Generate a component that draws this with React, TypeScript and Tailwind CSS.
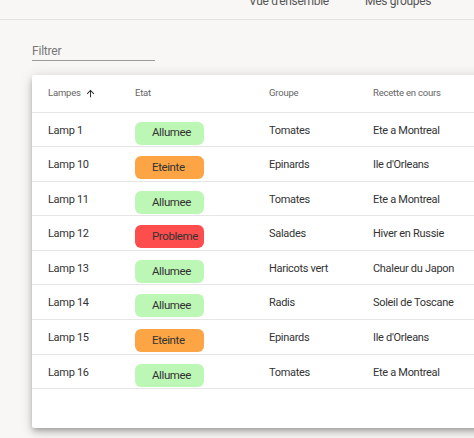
import React from 'react';

type Etat = 'Allumee' | 'Eteinte' | 'Probleme';

interface Lamp {
  name: string;
  etat: Etat;
  groupe: string;
  recette: string;
}

const lamps: Lamp[] = [
  { name: 'Lamp 1', etat: 'Allumee', groupe: 'Tomates', recette: 'Ete a Montreal' },
  { name: 'Lamp 10', etat: 'Eteinte', groupe: 'Epinards', recette: "Ile d'Orleans" },
  { name: 'Lamp 11', etat: 'Allumee', groupe: 'Tomates', recette: 'Ete a Montreal' },
  { name: 'Lamp 12', etat: 'Probleme', groupe: 'Salades', recette: 'Hiver en Russie' },
  { name: 'Lamp 13', etat: 'Allumee', groupe: 'Haricots vert', recette: 'Chaleur du Japon' },
  { name: 'Lamp 14', etat: 'Allumee', groupe: 'Radis', recette: 'Soleil de Toscane' },
  { name: 'Lamp 15', etat: 'Eteinte', groupe: 'Epinards', recette: "Ile d'Orleans" },
  { name: 'Lamp 16', etat: 'Allumee', groupe: 'Tomates', recette: 'Ete a Montreal' },
];

const badgeColors: Record<Etat, string> = {
  Allumee: 'bg-[#bdf7b5]',
  Eteinte: 'bg-[#fda445]',
  Probleme: 'bg-[#fe4d4d]',
};

const EtatBadge: React.FC<{ etat: Etat }> = ({ etat }) => (
  <div
    className={`mt-[9px] flex h-[23px] w-[69px] items-center rounded-[6px] pl-[17px] text-[11.5px] tracking-[-0.4px] text-[#333] ${badgeColors[etat]}`}
  >
    {etat}
  </div>
);

const SortArrow = () => (
  <svg width="11" height="11" viewBox="0 0 24 24" className="ml-[4px]">
    <path d="M4 12l1.41 1.41L11 7.83V20h2V7.83l5.58 5.59L20 12l-8-8-8 8z" fill="#222" />
  </svg>
);

export default function App() {
  return (
    <div className="h-[438px] w-[474px] overflow-hidden bg-[#f8f7f5] font-['Roboto',sans-serif]">
      <header className="h-[20px] overflow-hidden border-b border-[#e4e2df]">
        <nav className="-mt-[6px] flex pl-[249px] text-[12px] leading-[14px] tracking-[-0.3px] text-[#555]">
          <span className="w-[116px]">Vue d'ensemble</span>
          <span>Mes groupes</span>
        </nav>
      </header>

      <main className="pl-8">
        <input
          placeholder="Filtrer"
          className="mt-[21px] h-[20px] w-[123px] border-b border-[#9a9a9a] bg-transparent text-[12px] tracking-[-0.2px] text-[#333] outline-none placeholder:text-[#777]"
        />

        <div className="mt-[13px] w-[460px] rounded-[2px] bg-white shadow-[0_3px_5px_-1px_rgba(0,0,0,0.2),0_5px_8px_0_rgba(0,0,0,0.14),0_1px_14px_0_rgba(0,0,0,0.12)]">
          <div className="grid h-[38px] grid-cols-[87px_134px_104px_1fr] items-center border-b border-[#e6e6e6] pl-4 text-[9.5px] tracking-[-0.2px] text-[#666]">
            <div className="flex items-center">
              Lampes
              <SortArrow />
            </div>
            <div>Etat</div>
            <div>Groupe</div>
            <div>Recette en cours</div>
          </div>

          {lamps.map((lamp) => (
            <div
              key={lamp.name}
              className="grid h-[34.6px] grid-cols-[87px_134px_104px_1fr] border-b border-[#e6e6e6] pl-4 text-[11px] tracking-[-0.3px] text-[#333]"
            >
              <div className="pt-[10px]">{lamp.name}</div>
              <div>
                <EtatBadge etat={lamp.etat} />
              </div>
              <div className="pt-[10px]">{lamp.groupe}</div>
              <div className="pt-[10px]">{lamp.recette}</div>
            </div>
          ))}

          <div className="h-[39px]" />
        </div>
      </main>
    </div>
  );
}
